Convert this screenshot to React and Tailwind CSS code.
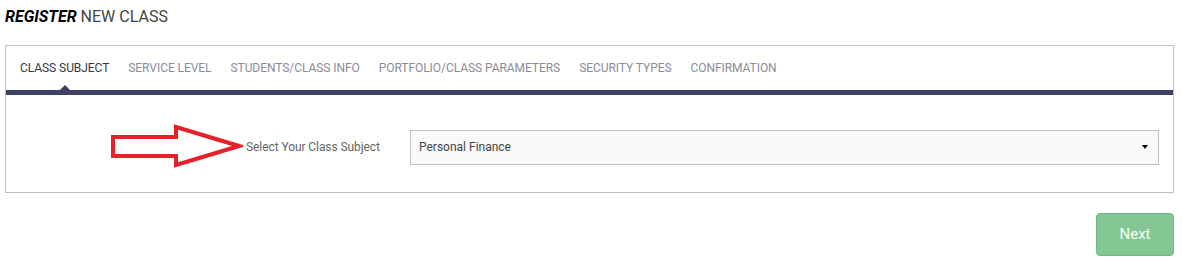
import React from "react"

const tabs = [
    "CLASS SUBJECT",
    "SERVICE LEVEL",
    "STUDENTS/CLASS INFO",
    "PORTFOLIO/CLASS PARAMETERS",
    "SECURITY TYPES",
    "CONFIRMATION",
]

// Red outlined arrow annotation pointing at the label
const PointerArrow = () => (
    <svg width="136" height="46" viewBox="0 0 136 46" className="shrink-0">
        <polygon
            points="6,13 69,13 69,3 132,22 69,41 69,32 6,32"
            fill="none"
            stroke="#e8202a"
            strokeWidth="4"
            strokeLinejoin="miter"
        />
    </svg>
)

const App = () => {
    return (
        <div className="w-[1182px] h-[267px] bg-white pl-[5px] pr-[8px] font-['Roboto',sans-serif]">
            {/* Page title */}
            <h1 className="pt-[7px] h-[45px] text-[16px] leading-[20px] text-[#444]">
                <span className="font-bold italic text-black">REGISTER</span> NEW CLASS
            </h1>

            {/* Wizard panel */}
            <div className="border border-[#b9c3c3]">
                <div className="flex gap-[19px] pl-[14px] h-[44px] items-center text-[12px] tracking-[-0.06px] leading-none">
                    {tabs.map((tab, i) => (
                        <div
                            key={tab}
                            className={`relative h-full flex items-center ${i === 0 ? "text-[#333845]" : "text-[#8b8b99]"}`}
                        >
                            {tab}
                            {i === 0 && (
                                <span className="absolute bottom-0 left-1/2 -translate-x-1/2 w-0 h-0 border-l-[5px] border-r-[5px] border-b-[5px] border-l-transparent border-r-transparent border-b-[#3d4162]" />
                            )}
                        </div>
                    ))}
                </div>
                <div className="h-[5px] bg-[#3d4162]" />

                {/* Subject row */}
                <div className="flex items-center pl-[101px] pr-[14px] pt-[29px] pb-[22px]">
                    <PointerArrow />
                    <label className="ml-[3px] w-[164px] text-[12px] tracking-[-0.08px] text-[#666]">Select Your Class Subject</label>
                    <div className="flex-1 h-[35px] flex items-center justify-between pl-[8px] pr-[10px] bg-[#f9f9f9] border border-[#b9c3c3] text-[12px] text-[#444]">
                        <span>Personal Finance</span>
                        <span className="w-0 h-0 border-l-[3px] border-r-[3px] border-t-[4px] border-l-transparent border-r-transparent border-t-black" />
                    </div>
                </div>
            </div>

            {/* Footer actions */}
            <div className="flex justify-end pt-[20px]">
                <button className="w-[78px] h-[43px] rounded-[4px] bg-[#84c794] border border-[#6cbb7e] text-[15px] text-[#f4fff6]">
                    Next
                </button>
            </div>
        </div>
    )
}

export default App
